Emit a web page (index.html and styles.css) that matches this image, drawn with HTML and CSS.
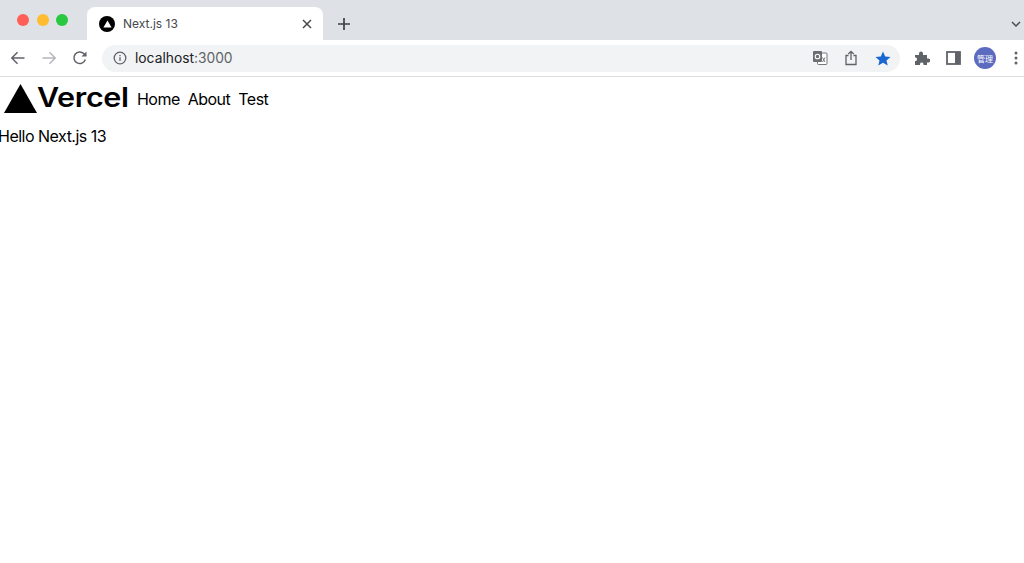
FILE: index.html
```html
<!DOCTYPE html>
<html lang="en">
<head>
<meta charset="utf-8">
<title>Next.js 13</title>
<link rel="stylesheet" href="styles.css">
</head>
<body>
<header class="chrome">
  <div class="tabstrip">
    <div class="lights">
      <span class="light red"></span><span class="light yellow"></span><span class="light green"></span>
    </div>
    <div class="tab">
      <span class="favicon"><svg width="9" height="8" viewBox="0 0 9 8"><path d="M4.500 0.500 8.600 7.500H0.400Z" fill="#fff"/></svg></span>
      <span class="tab-title">Next.js 13</span>
      <svg class="tab-close" width="10" height="10" viewBox="0 0 10 10"><path d="M1 1 9 9M9 1 1 9" stroke="#45484d" stroke-width="1.500"/></svg>
    </div>
    <svg class="new-tab" width="14" height="14" viewBox="0 0 14 14"><path d="M7 1V13M1 7H13" stroke="#3c4043" stroke-width="1.700"/></svg>
    <svg class="tab-menu" width="10" height="6" viewBox="0 0 10 6"><path d="M1 1 5 5 9 1" fill="none" stroke="#45484d" stroke-width="1.400"/></svg>
  </div>
  <div class="toolbar">
    <div class="nav-buttons">
      <svg width="16" height="14" viewBox="0 0 16 14"><path d="M14.500 7H2M7.500 1.200 1.800 7l5.700 5.800" fill="none" stroke="#5f6368" stroke-width="1.500"/></svg>
      <svg width="16" height="14" viewBox="0 0 16 14"><path d="M1.500 7H14M8.500 1.200 14.200 7l-5.700 5.800" fill="none" stroke="#b4b7bb" stroke-width="1.500"/></svg>
      <svg width="16" height="16" viewBox="0 0 16 16"><path d="M13.300 9.500A5.800 5.800 0 1 1 12 3.800L14 5.800" fill="none" stroke="#5f6368" stroke-width="1.500"/><path d="M14.500 1.500V6.500H9.500Z" fill="#5f6368"/></svg>
    </div>
    <div class="omnibox">
      <svg class="info" width="14" height="14" viewBox="0 0 14 14"><circle cx="7" cy="7" r="5.800" fill="none" stroke="#5f6368" stroke-width="1.300"/><path d="M7 6.300V10M7 4V5.300" stroke="#5f6368" stroke-width="1.300"/></svg>
      <span class="url">localhost<span class="port">:3000</span></span>
      <svg class="translate" width="16" height="16" viewBox="0 0 16 16"><rect x="5.500" y="3" width="9.500" height="11.500" rx="1" fill="#fff" stroke="#777" stroke-width="1"/><rect x="1" y="1" width="9" height="11" rx="1" fill="#6a6d71"/><circle cx="5.500" cy="6.500" r="2.300" fill="none" stroke="#fff" stroke-width="1.100"/><path d="M10.500 7.500 13 12M13 7.500 10.500 12" stroke="#777" stroke-width="1"/></svg>
      <svg class="share" width="14" height="16" viewBox="0 0 14 16"><path d="M4.500 5.500H2V14.500H12V5.500H9.500M7 10V1.500M4.300 4 7 1.300 9.700 4" fill="none" stroke="#5f6368" stroke-width="1.300"/></svg>
      <svg class="star" width="16" height="15" viewBox="0 0 16 15"><path d="M8 0.500 10.200 5.400 15.500 5.900 11.500 9.400 12.700 14.500 8 11.800 3.300 14.500 4.500 9.400 0.500 5.900 5.800 5.400Z" fill="#1a67d2"/></svg>
    </div>
    <div class="actions">
      <svg width="16" height="16" viewBox="0 0 16 16"><path d="M1 5H5V3.500A2 2 0 0 1 9 3.500V5H13V8.500H14.300A2 2 0 0 1 14.300 12.500H13V15H9.500V14A1.800 1.800 0 0 0 6 14V15H1V11H2A2 2 0 0 0 2 7.500H1Z" fill="#5f6368"/></svg>
      <svg width="15" height="14" viewBox="0 0 15 14"><rect x="1" y="1" width="13" height="12" fill="#fff" stroke="#5f6368" stroke-width="1.800"/><rect x="9" y="1" width="5" height="12" fill="#5f6368"/></svg>
      <span class="avatar">管理</span>
      <svg width="4" height="14" viewBox="0 0 4 14"><circle cx="2" cy="2" r="1.500" fill="#5f6368"/><circle cx="2" cy="7" r="1.500" fill="#5f6368"/><circle cx="2" cy="12" r="1.500" fill="#5f6368"/></svg>
    </div>
  </div>
</header>
<nav class="site-nav">
  <a class="logo" href="#">
    <svg width="33" height="29" viewBox="0 0 33 29"><path d="M16.500 0 33 29H0Z" fill="#000"/></svg>
    <span class="wordmark">Vercel</span>
  </a>
  <a class="link" href="#">Home</a>
  <a class="link" href="#">About</a>
  <a class="link" href="#">Test</a>
</nav>
<main class="content">Hello Next.js 13</main>
</body>
</html>
```
FILE: styles.css
```css
* { box-sizing: border-box; }
html, body { margin: 0; height: 100%; }
body {
  background: #fff;
  color: #000;
  font-family: Inter, "Liberation Sans", sans-serif;
  overflow: hidden;
}
svg { display: block; flex: none; }

.chrome { border-bottom: 1px solid #dcdee1; }

.tabstrip {
  height: 40px;
  background: #dee1e6;
  display: flex;
  align-items: flex-end;
}
.lights {
  width: 87px;
  height: 40px;
  padding: 14px 0 0 17px;
  display: flex;
  gap: 7.500px;
}
.light { width: 12px; height: 12px; border-radius: 50%; }
.red { background: #ff5f57; }
.yellow { background: #febc2e; }
.green { background: #28c840; }

.tab {
  width: 236px;
  height: 33px;
  background: #fff;
  border-radius: 8px 8px 0 0;
  display: flex;
  align-items: center;
  padding: 0 11px 0 12px;
}
.favicon {
  width: 16px;
  height: 16px;
  border-radius: 50%;
  background: #000;
  display: flex;
  align-items: center;
  justify-content: center;
}
.tab-title {
  margin-left: 8px;
  flex: 1;
  font-size: 12px;
  color: #45484d;
}
.new-tab { margin: 0 0 9px 14px; }
.tab-menu { margin: 0 3px 13px auto; }

.toolbar {
  height: 36px;
  background: #fff;
  display: flex;
  align-items: center;
}
.nav-buttons {
  display: flex;
  align-items: center;
  gap: 15px;
  padding-left: 10px;
  width: 102px;
}
.omnibox {
  width: 798px;
  height: 27px;
  border-radius: 14px;
  background: #f1f3f4;
  display: flex;
  align-items: center;
  padding: 0 9px 0 11px;
}
.url {
  margin-left: 8px;
  flex: 1;
  font-size: 13.800px;
  color: #202124;
}
.port { color: #5f6368; }
.translate { margin-right: 16px; }
.share { margin-right: 17px; }
.actions {
  display: flex;
  align-items: center;
  padding-left: 14px;
  flex: 1;
}
.actions svg:nth-child(2) { margin-left: 16px; }
.avatar {
  margin-left: 13px;
  width: 22px;
  height: 22px;
  border-radius: 50%;
  background: #5c6bc0;
  color: #fff;
  font: 8px "Noto Sans CJK JP", sans-serif;
  display: flex;
  align-items: center;
  justify-content: center;
  flex: none;
}
.actions svg:last-child { margin-left: 18px; }

.site-nav {
  display: flex;
  align-items: center;
  gap: 8px;
  padding: 6px 0 0 4px;
  height: 36px;
}
.logo { display: flex; align-items: center; color: #000; text-decoration: none; }
.wordmark {
  width: 92px;
  font-size: 27px;
  font-weight: 600;
  letter-spacing: -0.300px;
  line-height: 27px;
  margin-top: -2px;
  white-space: nowrap;
  transform: scaleX(1.130);
  transform-origin: left center;
}
.link {
  color: #000;
  text-decoration: none;
  font-size: 16px;
  letter-spacing: -0.520px;
  margin-top: 2px;
}
.content {
  margin: 14px 0 0 -2px;
  font-size: 16px;
  letter-spacing: -0.500px;
  line-height: 19px;
}
```
